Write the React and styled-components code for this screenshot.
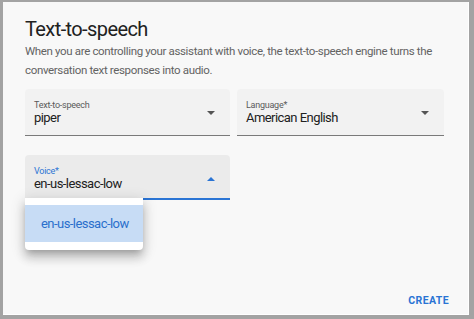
import React from "react";
import styled, { createGlobalStyle } from "styled-components";

const GlobalStyle = createGlobalStyle`
  html, body {
    margin: 0;
    padding: 0;
    background: #9c9c9c;
  }
  * {
    box-sizing: border-box;
  }
`;

const Frame = styled.div`
  width: 474px;
  height: 319px;
  padding: 2px 5px 4px 3px;
  background: #a3a3a3;
  font-family: Roboto, "Liberation Sans", sans-serif;
`;

const Dialog = styled.div`
  position: relative;
  height: 100%;
  background: #f8f8f8;
  border-right: 1px solid #ffffff;
  border-bottom: 1px solid #ffffff;
  padding: 15px 19px 0 22px;
  display: flex;
  flex-direction: column;
`;

const Title = styled.h2`
  margin: 0;
  font-size: 20px;
  font-weight: 400;
  letter-spacing: -0.6px;
  color: #212121;
  line-height: 24px;
`;

const Description = styled.p`
  margin: 1px 0 0;
  font-size: 11.5px;
  letter-spacing: -0.35px;
  line-height: 19px;
  color: #636363;
`;

const FieldRow = styled.div`
  display: grid;
  grid-template-columns: 205px 207px;
  gap: 7px;
  margin-top: ${(p) => p.$top}px;
`;

const Field = styled.div`
  position: relative;
  height: ${(p) => (p.$focused ? 45 : 47)}px;
  background: ${(p) => (p.$focused ? "#ebebeb" : "#f2f2f2")};
  border-radius: 4px 4px 0 0;
  border-bottom: ${(p) => (p.$focused ? "2px solid #2a74d4" : "1px solid #7a7a7a")};
  padding: 11px 15px 0 9px;
  display: flex;
  align-items: flex-start;
  justify-content: space-between;
`;

const FieldText = styled.div`
  display: flex;
  flex-direction: column;
`;

const Label = styled.span`
  font-size: 9px;
  letter-spacing: -0.25px;
  line-height: 10px;
  color: ${(p) => (p.$focused ? "#2a74d4" : "#5a5a5a")};
`;

const Value = styled.span`
  font-size: 13px;
  letter-spacing: -0.55px;
  line-height: 15px;
  color: #212121;
`;

const Arrow = styled.svg`
  width: 8px;
  height: 4px;
  margin-top: 11px;
  fill: ${(p) => (p.$focused ? "#2a74d4" : "#555")};
`;

const Menu = styled.div`
  position: absolute;
  left: 0;
  top: 100%;
  width: 118px;
  padding: 7px 0 8px;
  background: #ffffff;
  border-radius: 0 0 4px 4px;
  box-shadow: 0 5px 6px -3px rgba(0, 0, 0, 0.2),
    0 8px 10px 1px rgba(0, 0, 0, 0.14), 0 3px 14px 2px rgba(0, 0, 0, 0.12);
  z-index: 2;
`;

const MenuItem = styled.div`
  height: 37px;
  display: flex;
  align-items: center;
  padding-left: 16px;
  white-space: nowrap;
  font-size: 13px;
  letter-spacing: -0.55px;
  color: #2a6fcc;
  background: ${(p) => (p.$selected ? "#c7dcf5" : "transparent")};
`;

const Actions = styled.div`
  margin-top: auto;
  display: flex;
  justify-content: flex-end;
  padding: 0 0 6px;
`;

const Button = styled.button`
  border: none;
  background: none;
  padding: 0;
  font-family: inherit;
  font-size: 10.5px;
  line-height: 14px;
  font-weight: 700;
  letter-spacing: 0.4px;
  color: #2a74d4;
  text-transform: uppercase;
`;

function SelectField({ label, value, focused, children }) {
  return (
    <Field $focused={focused}>
      <FieldText>
        <Label $focused={focused}>{label}</Label>
        <Value>{value}</Value>
      </FieldText>
      <Arrow $focused={focused} viewBox="0 0 8 4">
        {focused ? <path d="M0 4 L4 0 L8 4 Z" /> : <path d="M0 0 L4 4 L8 0 Z" />}
      </Arrow>
      {children}
    </Field>
  );
}

export default function App() {
  return (
    <>
      <GlobalStyle />
      <Frame>
        <Dialog>
          <Title>Text-to-speech</Title>
          <Description>
            When you are controlling your assistant with voice, the text-to-speech engine turns the
            conversation text responses into audio.
          </Description>
          <FieldRow $top={9}>
            <SelectField label="Text-to-speech" value="piper" />
            <SelectField label="Language*" value="American English" />
          </FieldRow>
          <FieldRow $top={19}>
            <SelectField label="Voice*" value="en-us-lessac-low" focused>
              <Menu>
                <MenuItem $selected>en-us-lessac-low</MenuItem>
              </Menu>
            </SelectField>
          </FieldRow>
          <Actions>
            <Button>Create</Button>
          </Actions>
        </Dialog>
      </Frame>
    </>
  );
}
